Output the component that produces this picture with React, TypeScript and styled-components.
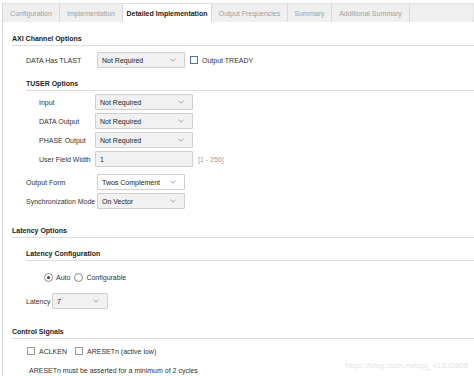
import { createGlobalStyle } from "styled-components";
import styled from "styled-components";

const GlobalStyle = createGlobalStyle`
  html, body {
    margin: 0;
    padding: 0;
    background: #ffffff;
    font-family: "Liberation Sans", Arial, sans-serif;
    font-size: 7px;
    color: #333;
  }
`;

const Frame = styled.div`
  position: relative;
  width: 474px;
  height: 376px;
  overflow: hidden;
  box-sizing: border-box;
  padding: 3px 0 0 2px;
`;

const Panel = styled.div`
  height: 100%;
  border-left: 1px solid #d4d4d4;
`;

const TabBar = styled.div`
  display: flex;
  height: 19px;
  background: #efefef;
  border-top: 1px solid #e2e2e2;
  box-sizing: border-box;
`;

const Tab = styled.div<{ $active?: boolean; $w: number }>`
  display: flex;
  align-items: center;
  justify-content: center;
  width: ${(p) => p.$w}px;
  box-sizing: border-box;
  border-right: 1px solid #d8d8d8;
  background: ${(p) => (p.$active ? "#ffffff" : "transparent")};
  color: ${(p) => (p.$active ? "#222" : "#a0a0a0")};
  font-weight: ${(p) => (p.$active ? 700 : 400)};
  white-space: nowrap;
`;

const TabFill = styled.div`
  flex: 1;
  border-right: 1px solid #e2e2e2;
`;

const Body = styled.div`
  display: flex;
  flex-direction: column;
`;

const SectionTitle = styled.div<{ $indent: number; $top: number }>`
  margin: ${(p) => p.$top}px 0 0 ${(p) => p.$indent}px;
  padding-bottom: 2px;
  line-height: 9px;
  font-weight: 700;
  color: #222;
  border-bottom: 1px solid #dedede;
`;

const Row = styled.div<{ $indent: number; $top: number }>`
  display: flex;
  align-items: center;
  height: 16px;
  margin: ${(p) => p.$top}px 0 0 ${(p) => p.$indent}px;
`;

const Label = styled.span<{ $w: number }>`
  width: ${(p) => p.$w}px;
  flex: none;
  color: #333;
  white-space: nowrap;
`;

const Select = styled.div<{ $w: number; $white?: boolean }>`
  display: flex;
  align-items: center;
  justify-content: space-between;
  width: ${(p) => p.$w}px;
  height: 16px;
  box-sizing: border-box;
  padding: 0 8px 0 4px;
  border: 1px solid #cfcfcf;
  border-radius: 1px;
  background: ${(p) => (p.$white ? "#ffffff" : "#f1f1f1")};
  color: #222;
`;

const TextField = styled(Select)`
  padding: 0 4px;
`;

const Hint = styled.span`
  margin-left: 5px;
  color: #a0a0a0;
`;

const Box = styled.span<{ $blue?: boolean }>`
  display: inline-block;
  width: 8px;
  height: 8px;
  box-sizing: border-box;
  border: 1px solid ${(p) => (p.$blue ? "#5470a6" : "#9a9a9a")};
  background: #fff;
  margin-right: 4px;
  flex: none;
`;

const Radio = styled.span<{ $on?: boolean }>`
  display: inline-flex;
  align-items: center;
  justify-content: center;
  width: 9px;
  height: 9px;
  box-sizing: border-box;
  border: 1px solid #8a8a8a;
  border-radius: 50%;
  margin-right: 3px;
  flex: none;
  &::after {
    content: "";
    display: ${(p) => (p.$on ? "block" : "none")};
    width: 3px;
    height: 3px;
    border-radius: 50%;
    background: #444;
  }
`;

const Option = styled.span<{ $gap?: number }>`
  display: inline-flex;
  align-items: center;
  margin-right: ${(p) => p.$gap ?? 0}px;
  color: #333;
`;

const Note = styled.div`
  margin: 7px 0 0 26px;
  line-height: 9px;
  color: #333;
`;

const Watermark = styled.div`
  position: absolute;
  right: 6px;
  bottom: 6px;
  font-size: 8px;
  color: #e4e4e4;
`;

const Chevron = () => (
  <svg width="6" height="4" viewBox="0 0 6 4">
    <path d="M0.5 0.8 L3 3.2 L5.5 0.8" fill="none" stroke="#9a9a9a" strokeWidth="0.9" />
  </svg>
);

const Drop = ({ w, value, white }: { w: number; value: string; white?: boolean }) => (
  <Select $w={w} $white={white}>
    <span>{value}</span>
    <Chevron />
  </Select>
);

const tabs = [
  { name: "Configuration", w: 57 },
  { name: "Implementation", w: 63 },
  { name: "Detailed Implementation", w: 89, active: true },
  { name: "Output Frequencies", w: 76 },
  { name: "Summary", w: 44 },
  { name: "Additional Summary", w: 78 },
];

export default function App() {
  return (
    <>
      <GlobalStyle />
      <Frame>
        <Panel>
          <TabBar>
            {tabs.map((t) => (
              <Tab key={t.name} $w={t.w} $active={t.active}>
                {t.name}
              </Tab>
            ))}
            <TabFill />
          </TabBar>
          <Body>
            <SectionTitle $indent={9} $top={12}>AXI Channel Options</SectionTitle>
            <Row $indent={23} $top={6}>
              <Label $w={71}>DATA Has TLAST</Label>
              <Drop w={88} value="Not Required" />
              <Option style={{ marginLeft: 5 }}>
                <Box $blue />
                Output TREADY
              </Option>
            </Row>

            <SectionTitle $indent={23} $top={11}>TUSER Options</SectionTitle>
            <Row $indent={36} $top={3}>
              <Label $w={56}>Input</Label>
              <Drop w={98} value="Not Required" />
            </Row>
            <Row $indent={36} $top={3}>
              <Label $w={56}>DATA Output</Label>
              <Drop w={98} value="Not Required" />
            </Row>
            <Row $indent={36} $top={3}>
              <Label $w={56}>PHASE Output</Label>
              <Drop w={98} value="Not Required" />
            </Row>
            <Row $indent={36} $top={3}>
              <Label $w={56}>User Field Width</Label>
              <TextField $w={98}>1</TextField>
              <Hint>[1 - 256]</Hint>
            </Row>

            <Row $indent={23} $top={7}>
              <Label $w={71}>Output Form</Label>
              <Drop w={88} value="Twos Complement" white />
            </Row>
            <Row $indent={23} $top={3}>
              <Label $w={71}>Synchronization Mode</Label>
              <Drop w={88} value="On Vector" />
            </Row>

            <SectionTitle $indent={9} $top={17}>Latency Options</SectionTitle>
            <SectionTitle $indent={23} $top={11}>Latency Configuration</SectionTitle>
            <Row $indent={41} $top={8}>
              <Option $gap={4}>
                <Radio $on />
                Auto
              </Option>
              <Option>
                <Radio />
                Configurable
              </Option>
            </Row>
            <Row $indent={23} $top={8}>
              <Label $w={26}>Latency</Label>
              <Drop w={56} value="7" />
            </Row>

            <SectionTitle $indent={9} $top={18}>Control Signals</SectionTitle>
            <Row $indent={24} $top={4}>
              <Option $gap={8}>
                <Box />
                ACLKEN
              </Option>
              <Option>
                <Box />
                ARESETn (active low)
              </Option>
            </Row>
            <Note>ARESETn must be asserted for a minimum of 2 cycles</Note>
          </Body>
        </Panel>
        <Watermark>https://blog.csdn.net/qq_41332806</Watermark>
      </Frame>
    </>
  );
}
